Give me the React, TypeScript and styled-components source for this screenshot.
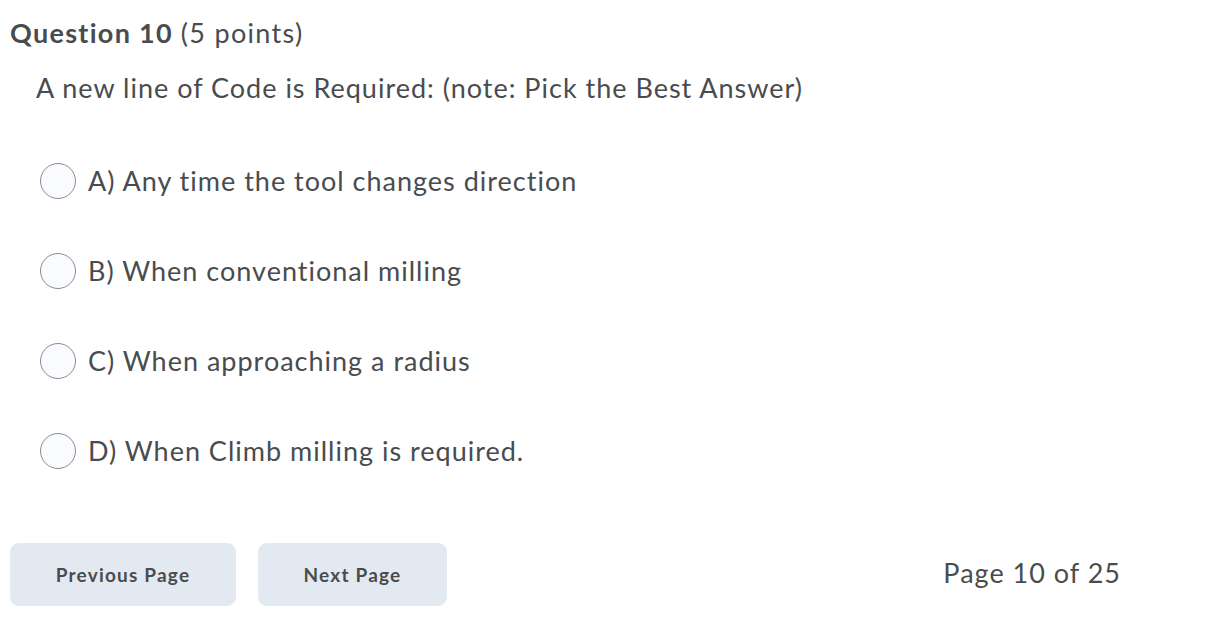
import React from "react";
import styled, { createGlobalStyle } from "styled-components";

const Global = createGlobalStyle`
  html, body { margin: 0; padding: 0; background: #fff; }
  body {
    font-family: Lato, "Open Sans", sans-serif;
    color: #494c4e;
    font-variant-ligatures: none;
  }
`;

const Page = styled.div`
  width: 1206px;
  height: 619px;
  box-sizing: border-box;
  padding: 13px 10px 0 10px;
  display: flex;
  flex-direction: column;
`;

const Heading = styled.h2`
  margin: 0;
  font-size: 27px;
  line-height: 40px;
  font-weight: 700;
  letter-spacing: 1.3px;
  color: #494c4e;
`;

const Points = styled.span`
  font-weight: 400;
`;

const Prompt = styled.p`
  margin: 15px 0 0 26px;
  font-size: 27px;
  line-height: 40px;
  letter-spacing: 1px;
`;

const Options = styled.div`
  margin: 55px 0 0 30px;
  display: flex;
  flex-direction: column;
  gap: 54px;
`;

const Option = styled.label`
  display: flex;
  align-items: center;
  gap: 12px;
  font-size: 27px;
  line-height: 36px;
  letter-spacing: 1px;
`;

const Radio = styled.span`
  width: 34px;
  height: 34px;
  border-radius: 50%;
  border: 1px solid #868c8f;
  background: #f9fbff;
  flex: none;
`;

const Footer = styled.div`
  margin-top: 74px;
  display: flex;
  align-items: center;
  gap: 22px;
`;

const Button = styled.button<{ $w: number }>`
  width: ${(p) => p.$w}px;
  height: 63px;
  border: none;
  border-radius: 9px;
  background: #e3e9f1;
  color: #494c4e;
  font-family: Lato, sans-serif;
  font-weight: 700;
  font-size: 19px;
  letter-spacing: 1.2px;
  cursor: pointer;
`;

const PageInfo = styled.div`
  margin-left: auto;
  margin-right: 75px;
  font-size: 27px;
  letter-spacing: 1px;
  padding-bottom: 5px;
`;

const options = [
  "A) Any time the tool changes direction",
  "B) When conventional milling",
  "C) When approaching a radius",
  "D) When Climb milling is required.",
];

export default function App() {
  return (
    <>
      <Global />
      <Page>
        <Heading>
          Question 10 <Points>(5 points)</Points>
        </Heading>
        <Prompt>A new line of Code is Required: (note: Pick the Best Answer)</Prompt>
        <Options>
          {options.map((o) => (
            <Option key={o}>
              <Radio />
              {o}
            </Option>
          ))}
        </Options>
        <Footer>
          <Button $w={226}>Previous Page</Button>
          <Button $w={189}>Next Page</Button>
          <PageInfo>Page 10 of 25</PageInfo>
        </Footer>
      </Page>
    </>
  );
}
